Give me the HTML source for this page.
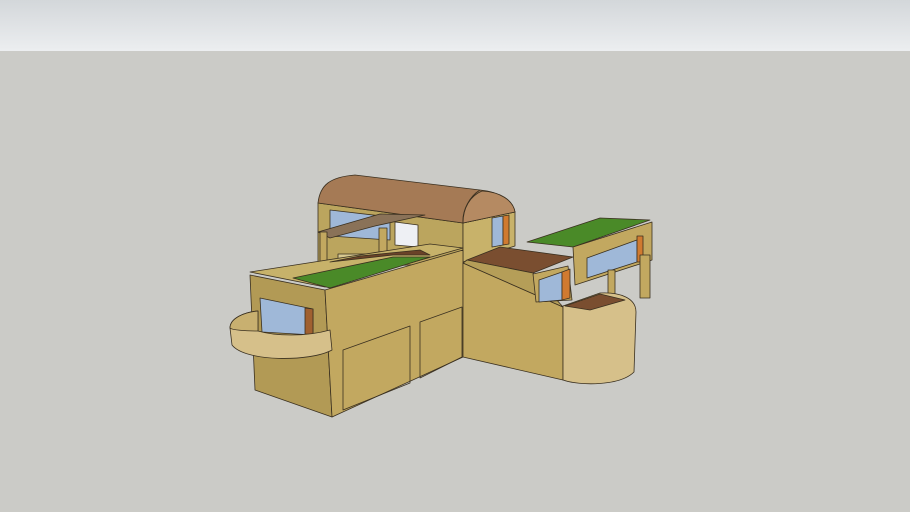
<!DOCTYPE html>
<html><head><meta charset="utf-8"><style>
html,body{margin:0;padding:0;width:910px;height:512px;overflow:hidden}
body{background:#cbcbc7;position:relative}
.sky{position:absolute;left:0;top:0;width:910px;height:51px;background:linear-gradient(#d3d7da,#eceef0)}
svg{position:absolute;left:0;top:0}
</style></head><body>
<div class="sky"></div>
<svg width="910" height="512" viewBox="0 0 910 512" stroke="#3a3020" stroke-width="0.8" stroke-linejoin="round">
<polygon points="318,203 463,223 463,262 318,270" fill="#bba55e"/>
<polygon points="463,223 515,212 515,246 463,262" fill="#c8b26a"/>
<polygon points="330,210 390,217 390,240 330,236" fill="#9fb8d8"/>
<polygon points="395,222 418,225 418,247 395,245" fill="#eef0f4"/>
<polygon points="492,218 503,216 503,245 492,247" fill="#9fb8d8"/>
<polygon points="503,216 509,215 509,244 503,245" fill="#d07a30"/>
<path d="M318,203 C320,185 330,177 355,175 L480,190 C500,192 513,200 515,212 L463,223 C462,210 470,196 480,190 C470,196 463,210 463,223 Z" fill="#a57a55"/>
<path d="M463,223 C463,208 470,196 482,191 C500,192 513,200 515,212 Z" fill="#b58a62"/>
<polygon points="318,232 380,214 425,215 375,226 330,238" fill="#8a7258"/>
<rect x="320" y="232" width="7" height="40" fill="#c2a860"/>
<rect x="379" y="228" width="8" height="38" fill="#c2a860"/>
<rect x="338" y="254" width="30" height="10" fill="#d8c890"/>
<polygon points="250,272 325,287 463,248 430,244" fill="#c7b26a"/>
<polygon points="293,278 330,288 430,257 393,257" fill="#4a8a28"/>
<polygon points="330,262 393,255 430,255 420,250 360,256" fill="#6a4228"/>
<polygon points="250,275 325,290 332,417 255,390" fill="#b29a55"/>
<polygon points="325,290 463,250 463,357 332,417" fill="#c2a860"/>
<polygon points="343,350 410,326 410,383 343,410" fill="none"/>
<polygon points="420,322 462,307 462,357 420,378" fill="none"/>
<polygon points="260,298 313,309 313,335 262,332" fill="#9fb8d8"/>
<polygon points="305,308 313,309 313,335 305,334" fill="#a06030"/>
<path d="M230,328 C230,318 245,312 258,311 L258,331 C275,336 305,337 330,330 L332,350 C310,362 245,362 232,345 Z" fill="#d6c08a"/>
<path d="M230,328 C230,318 245,312 258,311 L258,331 C245,331 232,330 230,328 Z" fill="#c8b070"/>
<polygon points="463,263 563,307 563,380 463,357" fill="#c2a860"/>
<polygon points="467,260 500,247 573,257 533,273" fill="#7a4e30"/>
<polygon points="463,263 467,260 533,273 563,307" fill="#b59e58"/>
<polygon points="527,242 600,218 650,220 573,247" fill="#4a8a28"/>
<polygon points="573,247 652,222 652,260 575,285" fill="#c2a860"/>
<polygon points="587,258 637,240 637,262 587,278" fill="#9fb8d8"/>
<rect x="637" y="236" width="6" height="26" fill="#d07a30"/>
<rect x="640" y="255" width="10" height="43" fill="#c2a860"/>
<rect x="608" y="270" width="7" height="30" fill="#c2a860"/>
<polygon points="533,274 568,266 572,300 536,302" fill="#c2a860"/>
<polygon points="539,280 562,272 562,300 539,302" fill="#9fb8d8"/>
<polygon points="562,272 570,269 570,298 562,300" fill="#d07a30"/>
<path d="M563,306 L600,293 C620,292 636,298 636,312 L634,372 C620,386 580,386 563,380 Z" fill="#d6c08a"/>
<polygon points="565,306 600,294 625,300 590,310" fill="#7a4e30"/>
</svg>
</body></html>
